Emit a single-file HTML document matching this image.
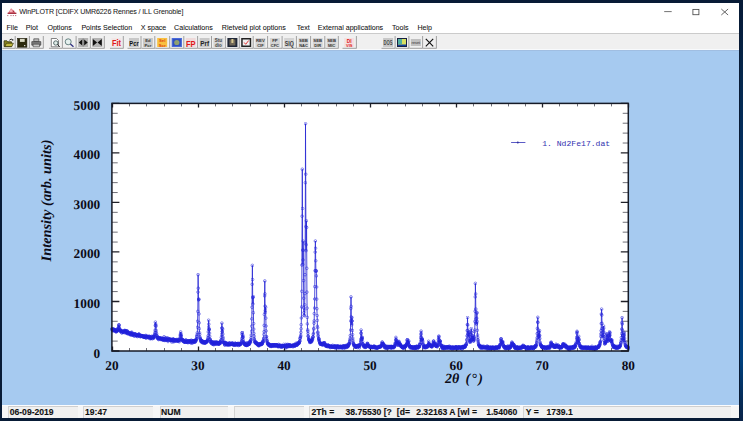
<!DOCTYPE html>
<html><head><meta charset="utf-8">
<style>
*{margin:0;padding:0;box-sizing:border-box}
html,body{width:743px;height:421px;overflow:hidden;background:#081b36;font-family:"Liberation Sans",sans-serif;position:relative}
.a{position:absolute;white-space:nowrap}
.bg{position:absolute}
.ttl{left:19.2px;top:8.2px;font-size:7.1px;letter-spacing:-0.13px;line-height:8px;color:#1a1a1a;-webkit-text-stroke:0.05px #1a1a1a}
.mn{top:23.5px;font-size:7.1px;line-height:8px;color:#111;-webkit-text-stroke:0.06px #111}
.pn{position:absolute;top:406px;height:12px;background:#f0f0f0;border-top:1px solid #cfcfcf;border-left:1px solid #d4d4d4}
.st{top:407px;font-size:8.6px;line-height:10px;font-weight:bold;color:#111;-webkit-text-stroke:0.12px #111}
.ax{font-family:"Liberation Serif",serif;font-weight:bold;fill:#0c0c18;text-rendering:geometricPrecision}
</style></head><body>
<div class="bg" style="left:740px;top:0;width:3px;height:421px;background:linear-gradient(#061a36 0px,#061c3a 20px,#05284e 80px,#003670 220px,#003c7c 300px,#00407e 360px,#062c58 400px,#0a2448 421px)"></div>
<div class="bg" style="left:2px;top:3px;width:737px;height:31px;background:#fff"></div>
<div class="bg" style="left:2px;top:33px;width:737px;height:1px;background:#cbcbcb"></div>
<div class="bg" style="left:2px;top:34px;width:737px;height:16px;background:#f0f0f0"></div>
<div class="bg" style="left:2px;top:50px;width:737px;height:355px;background:#a6caf0"></div>
<div class="bg" style="left:2px;top:49px;width:737px;height:1px;background:#f8fafc"></div>
<div class="bg" style="left:2px;top:50px;width:737px;height:1px;background:#a0bee2"></div>
<div class="bg" style="left:2px;top:405px;width:737px;height:13px;background:#f6f6f6"></div>
<div class="bg" style="left:2px;top:405px;width:737px;height:1px;background:#fbfcfe"></div>
<div class="pn" style="left:8px;width:70px"></div>
<div class="pn" style="left:83px;width:70px"></div>
<div class="pn" style="left:159.5px;width:68.5px"></div>
<div class="pn" style="left:234px;width:70px"></div>
<div class="pn" style="left:309px;width:211px"></div>
<div class="pn" style="left:523px;width:208px"></div>
<svg class="bg" style="left:0;top:0" width="743" height="421" viewBox="0 0 743 421">
 <defs><marker id="m" markerUnits="userSpaceOnUse" markerWidth="4" markerHeight="4" refX="2" refY="2" viewBox="0 0 4 4"><circle cx="2" cy="2" r="1.35" fill="none" stroke="#2626dc" stroke-width="0.5"/></marker></defs>
 <!-- title icon -->
 <path d="M7.6 13.8 L11.1 8.3 L16.4 13.8 Z" fill="#dc6a78"/>
 <path d="M10.3 9.4 L12 9.4 L12.8 12.2 L9.6 12.2Z" fill="#f4b4bc"/>
 <circle cx="13.6" cy="11.2" r="0.8" fill="#a83040"/>
 <path d="M7.6 13.3 H16.4" stroke="#a02838" stroke-width="1.2"/>
 <path d="M7.3 15.6 H8.3 M10.5 15.6 H11.5 M12.8 15.6 H13.8 M15.2 15.6 H16.2" stroke="#a04050" stroke-width="0.9"/>
 <!-- window controls -->
 <path d="M664.2 11.6 H671.7" stroke="#5a5a5a" stroke-width="0.85"/>
 <rect x="692.9" y="9.4" width="6" height="5.3" fill="none" stroke="#4a4a4a" stroke-width="0.85"/>
 <path d="M721.3 9 L728.1 15 M728.1 9 L721.3 15" stroke="#4a4a4a" stroke-width="0.85"/>
 <path d="M15.2 36 V48.5 M2.5 48.3 H15.2" stroke="#a0a0a0" stroke-width="1" fill="none"/>
 <g transform="translate(3.6 38.0)"><path d="M0.5 2.8 H3.3 L4.3 3.8 H7.8 V8.6 H0.5Z" fill="#8a8420" stroke="#34320c" stroke-width="0.8"/><path d="M1.2 8.6 L2.8 5.2 H9.8 L8.2 8.6Z" fill="#c0b840" stroke="#34320c" stroke-width="0.7"/><path d="M5.8 2.2 Q7.6 0.2 9.2 1.8" fill="none" stroke="#111" stroke-width="0.9"/><path d="M8.2 2.6 L9.8 2.6 L9.6 0.9Z" fill="#111"/></g>
 <path d="M29.4 36 V48.5 M15.7 48.3 H29.4" stroke="#a0a0a0" stroke-width="1" fill="none"/>
 <g transform="translate(17.3 38.0)"><rect x="0.4" y="0.4" width="9.2" height="8.8" fill="#2c2a0e" stroke="#1a1808" stroke-width="0.6"/><rect x="2.6" y="0.9" width="4.8" height="3" fill="#d8d8c4"/><rect x="6.8" y="7" width="1.2" height="1.2" fill="#e8e8e8"/></g>
 <path d="M43.3 36 V48.5 M29.9 48.3 H43.3" stroke="#a0a0a0" stroke-width="1" fill="none"/>
 <g transform="translate(31.3 38.0)"><path d="M2.5 0.8 H7.5 V3.6 H2.5Z" fill="#b8b8b8" stroke="#484848" stroke-width="0.7"/><path d="M0.5 3.6 H9.5 V7.2 H0.5Z" fill="#7a7a7a" stroke="#404040" stroke-width="0.7"/><path d="M1.8 6.2 H8.2 V8.8 H1.8Z" fill="#c8c8c8" stroke="#404040" stroke-width="0.6"/></g>
 <path d="M62.4 36 V48.5 M49.0 48.3 H62.4" stroke="#a0a0a0" stroke-width="1" fill="none"/>
 <g transform="translate(50.5 38.0)"><path d="M0.8 0.5 H6 L8 2.5 V8.8 H0.8Z" fill="#fff" stroke="#505050" stroke-width="0.7"/><circle cx="5.3" cy="5" r="2.2" fill="#e0ece8" stroke="#3a5050" stroke-width="0.8"/><path d="M6.8 6.5 L9.3 8.8" stroke="#222" stroke-width="1"/></g>
 <path d="M76.1 36 V48.5 M62.9 48.3 H76.1" stroke="#a0a0a0" stroke-width="1" fill="none"/>
 <g transform="translate(64.2 38.0)"><circle cx="4" cy="3.8" r="3" fill="#e4f0ee" stroke="#4a6a6a" stroke-width="0.8"/><path d="M6.2 6 L9.3 8.8" stroke="#303080" stroke-width="1.3"/></g>
 <path d="M90.3 36 V48.5 M76.6 48.3 H90.3" stroke="#a0a0a0" stroke-width="1" fill="none"/>
 <g transform="translate(78.2 38.0)"><rect x="0" y="0" width="10" height="9" fill="#b4b4b4"/><path d="M0.5 4.5 L4 1.5 V7.5Z M9.5 4.5 L6 1.5 V7.5Z" fill="#111"/><path d="M5 0.5 V8.5" stroke="#555" stroke-width="0.6"/></g>
 <path d="M104.3 36 V48.5 M90.8 48.3 H104.3" stroke="#a0a0a0" stroke-width="1" fill="none"/>
 <g transform="translate(92.3 38.0)"><rect x="0" y="0" width="10" height="9" fill="#b4b4b4"/><path d="M0.5 1 L4.8 4.5 L0.5 8Z M9.5 1 L5.2 4.5 L9.5 8Z" fill="#111"/></g>
 <path d="M123.3 36 V48.5 M110.0 48.3 H123.3" stroke="#a0a0a0" stroke-width="1" fill="none"/>
 <g transform="translate(111.4 38.0)"><rect x="0" y="0" width="10" height="9" fill="#f2e6e6"/><text x="5" y="8.3" font-family="Liberation Sans" font-size="8.5" font-weight="bold" fill="#e01818" text-anchor="middle" textLength="9" lengthAdjust="spacingAndGlyphs">Fit</text></g>
 <path d="M141.0 36 V48.5 M127.5 48.3 H141.0" stroke="#a0a0a0" stroke-width="1" fill="none"/>
 <g transform="translate(129.0 38.0)"><rect x="0" y="0" width="10" height="9" fill="#c8c8c8"/><text x="5" y="7.8" font-family="Liberation Sans" font-size="7.5" font-weight="bold" fill="#111" text-anchor="middle" textLength="9.4" lengthAdjust="spacingAndGlyphs">Pcr</text></g>
 <path d="M154.8 36 V48.5 M141.5 48.3 H154.8" stroke="#a0a0a0" stroke-width="1" fill="none"/>
 <g transform="translate(142.9 38.0)"><rect x="0" y="0" width="10" height="9" fill="#c8c8c8"/><text x="5" y="4" font-family="Liberation Sans" font-size="4.2" font-weight="bold" fill="#333" text-anchor="middle">Ed</text><text x="5" y="8.5" font-family="Liberation Sans" font-size="4.2" font-weight="bold" fill="#333" text-anchor="middle">Pcr</text></g>
 <path d="M169.7 36 V48.5 M155.3 48.3 H169.7" stroke="#a0a0a0" stroke-width="1" fill="none"/>
 <g transform="translate(157.2 38.0)"><rect x="0" y="0" width="10" height="9" fill="#f8c040"/><text x="5" y="4" font-family="Liberation Sans" font-size="4.2" font-weight="bold" fill="#e04010" text-anchor="middle">Sel</text><text x="5" y="8.5" font-family="Liberation Sans" font-size="4.2" font-weight="bold" fill="#e04010" text-anchor="middle">Scr</text></g>
 <path d="M183.8 36 V48.5 M170.2 48.3 H183.8" stroke="#a0a0a0" stroke-width="1" fill="none"/>
 <g transform="translate(171.8 38.0)"><rect x="0" y="0" width="10" height="9" fill="#3050c0"/><circle cx="5" cy="4.5" r="2.6" fill="#90a070"/><rect x="0.5" y="0.5" width="9" height="8" fill="none" stroke="#5070e0" stroke-width="0.8"/></g>
 <path d="M197.6 36 V48.5 M184.3 48.3 H197.6" stroke="#a0a0a0" stroke-width="1" fill="none"/>
 <g transform="translate(185.7 38.0)"><rect x="0" y="0" width="10" height="9" fill="#eedada"/><text x="5" y="8.5" font-family="Liberation Sans" font-size="9.5" font-weight="bold" fill="#e01818" text-anchor="middle" textLength="9.6" lengthAdjust="spacingAndGlyphs">FP</text></g>
 <path d="M211.5 36 V48.5 M198.1 48.3 H211.5" stroke="#a0a0a0" stroke-width="1" fill="none"/>
 <g transform="translate(199.6 38.0)"><rect x="0" y="0" width="10" height="9" fill="#c8c8c8"/><text x="5" y="7.5" font-family="Liberation Sans" font-size="6.3" font-weight="bold" fill="#222" text-anchor="middle">Prf</text></g>
 <path d="M225.4 36 V48.5 M212.0 48.3 H225.4" stroke="#a0a0a0" stroke-width="1" fill="none"/>
 <g transform="translate(213.4 38.0)"><rect x="0" y="0" width="10" height="9" fill="#d4d4d4"/><text x="5" y="4" font-family="Liberation Sans" font-size="4.5" font-weight="bold" fill="#444" text-anchor="middle">Stu</text><text x="5" y="8.6" font-family="Liberation Sans" font-size="4.5" font-weight="bold" fill="#444" text-anchor="middle">dio</text></g>
 <path d="M239.3 36 V48.5 M225.9 48.3 H239.3" stroke="#a0a0a0" stroke-width="1" fill="none"/>
 <g transform="translate(227.4 38.0)"><rect x="0" y="0" width="10" height="9" fill="#202838"/><rect x="2" y="1.5" width="6" height="6" fill="#706858"/><rect x="4" y="1" width="2" height="4" fill="#d8c890"/></g>
 <path d="M253.2 36 V48.5 M239.8 48.3 H253.2" stroke="#a0a0a0" stroke-width="1" fill="none"/>
 <g transform="translate(241.2 38.0)"><rect x="0" y="0" width="10" height="9" fill="#222"/><rect x="1.5" y="1.5" width="7" height="6" fill="#f0f0f0"/><path d="M3 4.5 L4.5 6.3 L7.5 2.5" fill="none" stroke="#e02020" stroke-width="0.9"/></g>
 <path d="M267.6 36 V48.5 M253.7 48.3 H267.6" stroke="#a0a0a0" stroke-width="1" fill="none"/>
 <g transform="translate(255.4 38.0)"><rect x="0" y="0" width="10" height="9" fill="#d4d4d4"/><text x="5" y="4" font-family="Liberation Sans" font-size="4.3" font-weight="bold" fill="#333" text-anchor="middle">REV</text><text x="5" y="8.6" font-family="Liberation Sans" font-size="4" font-weight="bold" fill="#333" text-anchor="middle">CIF</text></g>
 <path d="M282.1 36 V48.5 M268.1 48.3 H282.1" stroke="#a0a0a0" stroke-width="1" fill="none"/>
 <g transform="translate(269.9 38.0)"><rect x="0" y="0" width="10" height="9" fill="#d4d4d4"/><text x="5" y="4" font-family="Liberation Sans" font-size="4.3" font-weight="bold" fill="#333" text-anchor="middle">FP</text><text x="5" y="8.6" font-family="Liberation Sans" font-size="4" font-weight="bold" fill="#333" text-anchor="middle">CFC</text></g>
 <path d="M296.4 36 V48.5 M282.6 48.3 H296.4" stroke="#a0a0a0" stroke-width="1" fill="none"/>
 <g transform="translate(284.2 38.0)"><rect x="0" y="0" width="10" height="9" fill="#d4d4d4"/><text x="5" y="7.6" font-family="Liberation Sans" font-size="7" font-weight="bold" fill="#3a3a3a" text-anchor="middle" textLength="9" lengthAdjust="spacingAndGlyphs">SIQ</text></g>
 <path d="M310.6 36 V48.5 M296.9 48.3 H310.6" stroke="#a0a0a0" stroke-width="1" fill="none"/>
 <g transform="translate(298.5 38.0)"><rect x="0" y="0" width="10" height="9" fill="#d4d4d4"/><text x="5" y="4" font-family="Liberation Sans" font-size="4.3" font-weight="bold" fill="#333" text-anchor="middle">SEB</text><text x="5" y="8.6" font-family="Liberation Sans" font-size="4" font-weight="bold" fill="#333" text-anchor="middle">NAC</text></g>
 <path d="M324.8 36 V48.5 M311.1 48.3 H324.8" stroke="#a0a0a0" stroke-width="1" fill="none"/>
 <g transform="translate(312.7 38.0)"><rect x="0" y="0" width="10" height="9" fill="#d4d4d4"/><text x="5" y="4" font-family="Liberation Sans" font-size="4.3" font-weight="bold" fill="#333" text-anchor="middle">SEB</text><text x="5" y="8.6" font-family="Liberation Sans" font-size="4" font-weight="bold" fill="#333" text-anchor="middle">DIR</text></g>
 <path d="M338.3 36 V48.5 M325.3 48.3 H338.3" stroke="#a0a0a0" stroke-width="1" fill="none"/>
 <g transform="translate(326.6 38.0)"><rect x="0" y="0" width="10" height="9" fill="#d4d4d4"/><text x="5" y="4" font-family="Liberation Sans" font-size="4.3" font-weight="bold" fill="#333" text-anchor="middle">SEB</text><text x="5" y="8.6" font-family="Liberation Sans" font-size="4" font-weight="bold" fill="#333" text-anchor="middle">MIC</text></g>
 <path d="M356.4 36 V48.5 M342.5 48.3 H356.4" stroke="#a0a0a0" stroke-width="1" fill="none"/>
 <g transform="translate(344.2 38.0)"><rect x="0" y="0" width="10" height="9" fill="#f4e0e0"/><text x="5" y="4.5" font-family="Liberation Sans" font-size="4.8" font-weight="bold" fill="#e01818" text-anchor="middle">DI</text><text x="5" y="8.5" font-family="Liberation Sans" font-size="4" font-weight="bold" fill="#e01818" text-anchor="middle">VIS</text></g>
 <path d="M395.1 36 V48.5 M381.5 48.3 H395.1" stroke="#a0a0a0" stroke-width="1" fill="none"/>
 <g transform="translate(383.1 38.0)"><rect x="0" y="0" width="10" height="9" fill="#c8c8c8"/><text x="5" y="7.3" font-family="Liberation Sans" font-size="6.8" font-weight="bold" fill="#484848" text-anchor="middle" textLength="9" lengthAdjust="spacingAndGlyphs">DOS</text></g>
 <path d="M408.9 36 V48.5 M395.6 48.3 H408.9" stroke="#a0a0a0" stroke-width="1" fill="none"/>
 <g transform="translate(397.0 38.0)"><rect x="0" y="0" width="10" height="9" fill="#182040"/><rect x="1" y="1" width="8" height="6" fill="#d8e060"/><rect x="1" y="1" width="4" height="5" fill="#50b0a0"/><rect x="1" y="6.5" width="8" height="1.5" fill="#1040a0"/></g>
 <path d="M422.6 36 V48.5 M409.4 48.3 H422.6" stroke="#a0a0a0" stroke-width="1" fill="none"/>
 <g transform="translate(410.8 38.0)"><rect x="0" y="1" width="10" height="7" fill="#c0c0c0"/><text x="5" y="6" font-family="Liberation Sans" font-size="3.6" font-weight="bold" fill="#555" text-anchor="middle">reset</text></g>
 <path d="M436.4 36 V48.5 M423.1 48.3 H436.4" stroke="#a0a0a0" stroke-width="1" fill="none"/>
 <g transform="translate(424.5 38.0)"><path d="M1.3 0.8 L8.7 8.4 M8.7 0.8 L1.3 8.4" stroke="#111" stroke-width="1.15"/></g>
 <!-- plot -->
 <rect x="111.9" y="103.4" width="516.4" height="247.6" fill="#fff"/>
 <path d="M129.50 351.0 v-3 M129.50 103.4 v3 M146.50 351.0 v-3 M146.50 103.4 v3 M164.50 351.0 v-3 M164.50 103.4 v3 M181.50 351.0 v-3 M181.50 103.4 v3 M215.50 351.0 v-3 M215.50 103.4 v3 M232.50 351.0 v-3 M232.50 103.4 v3 M250.50 351.0 v-3 M250.50 103.4 v3 M267.50 351.0 v-3 M267.50 103.4 v3 M301.50 351.0 v-3 M301.50 103.4 v3 M318.50 351.0 v-3 M318.50 103.4 v3 M336.50 351.0 v-3 M336.50 103.4 v3 M353.50 351.0 v-3 M353.50 103.4 v3 M387.50 351.0 v-3 M387.50 103.4 v3 M405.50 351.0 v-3 M405.50 103.4 v3 M422.50 351.0 v-3 M422.50 103.4 v3 M439.50 351.0 v-3 M439.50 103.4 v3 M473.50 351.0 v-3 M473.50 103.4 v3 M491.50 351.0 v-3 M491.50 103.4 v3 M508.50 351.0 v-3 M508.50 103.4 v3 M525.50 351.0 v-3 M525.50 103.4 v3 M559.50 351.0 v-3 M559.50 103.4 v3 M577.50 351.0 v-3 M577.50 103.4 v3 M594.50 351.0 v-3 M594.50 103.4 v3 M611.50 351.0 v-3 M611.50 103.4 v3 M111.9 341.10 h5.8 M628.3 341.10 h-5.6 M111.9 331.19 h5.8 M628.3 331.19 h-5.6 M111.9 321.29 h5.8 M628.3 321.29 h-5.6 M111.9 311.38 h5.8 M628.3 311.38 h-5.6 M111.9 291.58 h5.8 M628.3 291.58 h-5.6 M111.9 281.67 h5.8 M628.3 281.67 h-5.6 M111.9 271.77 h5.8 M628.3 271.77 h-5.6 M111.9 261.86 h5.8 M628.3 261.86 h-5.6 M111.9 242.06 h5.8 M628.3 242.06 h-5.6 M111.9 232.15 h5.8 M628.3 232.15 h-5.6 M111.9 222.25 h5.8 M628.3 222.25 h-5.6 M111.9 212.34 h5.8 M628.3 212.34 h-5.6 M111.9 192.54 h5.8 M628.3 192.54 h-5.6 M111.9 182.63 h5.8 M628.3 182.63 h-5.6 M111.9 172.73 h5.8 M628.3 172.73 h-5.6 M111.9 162.82 h5.8 M628.3 162.82 h-5.6 M111.9 143.02 h5.8 M628.3 143.02 h-5.6 M111.9 133.11 h5.8 M628.3 133.11 h-5.6 M111.9 123.21 h5.8 M628.3 123.21 h-5.6 M111.9 113.30 h5.8 M628.3 113.30 h-5.6" stroke="#707078" stroke-width="1" fill="none"/><path d="M112.50 351.0 v-4.5 M112.50 103.4 v4 M198.50 351.0 v-4.5 M198.50 103.4 v4 M284.50 351.0 v-4.5 M284.50 103.4 v4 M370.50 351.0 v-4.5 M370.50 103.4 v4 M456.50 351.0 v-4.5 M456.50 103.4 v4 M542.50 351.0 v-4.5 M542.50 103.4 v4 M628.50 351.0 v-4.5 M628.50 103.4 v4 M111.9 351.00 h7.5 M628.3 351.00 h-7.5 M111.9 301.48 h7.5 M628.3 301.48 h-7.5 M111.9 251.96 h7.5 M628.3 251.96 h-7.5 M111.9 202.44 h7.5 M628.3 202.44 h-7.5 M111.9 152.92 h7.5 M628.3 152.92 h-7.5 M111.9 103.40 h7.5 M628.3 103.40 h-7.5" stroke="#202028" stroke-width="1.3" fill="none"/>
 <polyline points="111.9,329.5 112.1,328.6 112.2,328.7 112.4,330.1 112.6,330.0 112.8,330.2 112.9,329.4 113.1,329.9 113.3,329.3 113.4,331.3 113.6,328.8 113.8,330.1 114.0,329.6 114.1,330.2 114.3,330.4 114.5,329.8 114.7,329.6 114.8,330.4 115.0,330.4 115.2,329.8 115.3,331.0 115.5,331.5 115.7,330.1 115.9,330.9 116.0,331.9 116.2,331.1 116.4,330.8 116.5,331.4 116.7,331.6 116.9,330.4 117.1,329.7 117.2,330.5 117.4,330.8 117.6,329.8 117.8,329.4 117.9,329.9 118.1,328.8 118.3,327.8 118.4,327.8 118.6,326.8 118.8,324.7 119.0,325.2 119.1,325.2 119.3,327.8 119.5,328.6 119.6,329.7 119.8,331.0 120.0,330.1 120.2,330.1 120.3,331.3 120.5,329.9 120.7,330.5 120.9,330.8 121.0,331.0 121.2,330.7 121.4,332.5 121.5,331.1 121.7,331.2 121.9,333.0 122.1,331.4 122.2,331.9 122.4,331.2 122.6,332.1 122.7,331.8 122.9,331.6 123.1,332.5 123.3,331.4 123.4,331.9 123.6,331.5 123.8,332.2 123.9,331.0 124.1,331.4 124.3,331.9 124.5,331.3 124.6,330.8 124.8,330.3 125.0,332.8 125.2,330.9 125.3,331.1 125.5,331.5 125.7,332.2 125.8,330.5 126.0,332.5 126.2,331.2 126.4,330.8 126.5,333.1 126.7,332.2 126.9,333.1 127.0,332.1 127.2,331.3 127.4,331.0 127.6,333.9 127.7,333.1 127.9,332.3 128.1,331.8 128.3,332.7 128.4,333.6 128.6,332.9 128.8,333.2 128.9,333.4 129.1,333.9 129.3,333.1 129.5,333.2 129.6,333.6 129.8,333.7 130.0,334.6 130.1,334.0 130.3,332.9 130.5,333.9 130.7,334.9 130.8,332.9 131.0,333.5 131.2,332.4 131.4,334.0 131.5,334.4 131.7,335.1 131.9,333.2 132.0,332.3 132.2,334.8 132.4,334.7 132.6,333.9 132.7,334.9 132.9,334.6 133.1,334.6 133.2,334.3 133.4,333.7 133.6,334.5 133.8,333.9 133.9,334.9 134.1,334.4 134.3,336.2 134.4,335.7 134.6,334.2 134.8,335.2 135.0,334.4 135.1,334.4 135.3,333.9 135.5,334.3 135.7,334.2 135.8,335.0 136.0,335.5 136.2,335.6 136.3,335.4 136.5,335.9 136.7,335.5 136.9,335.2 137.0,335.0 137.2,335.5 137.4,336.6 137.5,335.3 137.7,335.2 137.9,334.6 138.1,335.0 138.2,335.9 138.4,336.0 138.6,334.1 138.8,335.0 138.9,334.3 139.1,334.1 139.3,336.2 139.4,335.4 139.6,335.3 139.8,335.3 140.0,335.3 140.1,335.6 140.3,335.7 140.5,336.9 140.6,336.0 140.8,336.4 141.0,335.8 141.2,336.3 141.3,335.5 141.5,335.4 141.7,335.8 141.9,335.8 142.0,336.0 142.2,336.4 142.4,336.3 142.5,336.5 142.7,335.9 142.9,336.2 143.1,335.9 143.2,337.2 143.4,335.7 143.6,336.9 143.7,336.9 143.9,336.5 144.1,336.8 144.3,336.2 144.4,336.9 144.6,337.3 144.8,337.1 144.9,335.6 145.1,336.6 145.3,337.4 145.5,336.6 145.6,337.8 145.8,335.4 146.0,337.8 146.2,336.4 146.3,336.4 146.5,337.8 146.7,336.6 146.8,336.2 147.0,336.6 147.2,336.7 147.4,336.3 147.5,336.8 147.7,336.7 147.9,337.1 148.0,336.6 148.2,337.7 148.4,336.5 148.6,337.4 148.7,337.9 148.9,336.9 149.1,336.0 149.3,336.5 149.4,337.6 149.6,336.7 149.8,337.6 149.9,337.4 150.1,337.2 150.3,338.9 150.5,337.2 150.6,338.1 150.8,337.8 151.0,338.4 151.1,338.4 151.3,338.1 151.5,336.9 151.7,336.3 151.8,337.5 152.0,336.7 152.2,337.6 152.4,338.8 152.5,337.3 152.7,337.1 152.9,337.7 153.0,337.2 153.2,337.0 153.4,337.9 153.6,338.3 153.7,337.3 153.9,337.1 154.1,337.1 154.2,335.8 154.4,334.9 154.6,335.9 154.8,334.2 154.9,332.5 155.1,330.2 155.3,325.5 155.4,322.1 155.6,324.1 155.8,325.3 156.0,326.3 156.1,330.3 156.3,332.4 156.5,333.7 156.7,335.4 156.8,336.8 157.0,335.8 157.2,338.0 157.3,337.1 157.5,337.6 157.7,338.6 157.9,337.1 158.0,337.8 158.2,338.9 158.4,337.7 158.5,338.5 158.7,339.6 158.9,338.8 159.1,338.2 159.2,338.0 159.4,338.4 159.6,338.5 159.8,338.2 159.9,338.7 160.1,337.8 160.3,338.5 160.4,338.5 160.6,338.3 160.8,339.5 161.0,339.2 161.1,337.8 161.3,338.6 161.5,339.0 161.6,338.6 161.8,339.2 162.0,338.7 162.2,339.4 162.3,338.8 162.5,340.1 162.7,338.1 162.9,339.4 163.0,340.1 163.2,339.2 163.4,339.4 163.5,339.0 163.7,339.9 163.9,338.9 164.1,336.7 164.2,340.1 164.4,339.0 164.6,339.5 164.7,339.2 164.9,340.5 165.1,340.1 165.3,339.0 165.4,339.4 165.6,338.3 165.8,339.9 165.9,339.3 166.1,337.5 166.3,340.0 166.5,340.1 166.6,339.5 166.8,339.6 167.0,339.0 167.2,339.5 167.3,340.1 167.5,339.5 167.7,337.9 167.8,338.8 168.0,341.5 168.2,339.8 168.4,340.3 168.5,339.3 168.7,339.9 168.9,338.5 169.0,339.2 169.2,339.2 169.4,339.7 169.6,339.9 169.7,339.6 169.9,339.0 170.1,339.5 170.3,340.1 170.4,339.1 170.6,339.8 170.8,340.0 170.9,340.5 171.1,340.4 171.3,340.4 171.5,341.9 171.6,339.4 171.8,339.7 172.0,340.2 172.1,339.4 172.3,339.8 172.5,339.9 172.7,341.8 172.8,340.3 173.0,339.8 173.2,339.1 173.4,339.0 173.5,339.3 173.7,341.0 173.9,341.7 174.0,339.9 174.2,340.3 174.4,339.7 174.6,340.4 174.7,340.2 174.9,341.4 175.1,340.1 175.2,340.7 175.4,340.2 175.6,340.1 175.8,340.5 175.9,340.2 176.1,340.5 176.3,340.0 176.4,340.1 176.6,340.9 176.8,340.9 177.0,339.4 177.1,340.6 177.3,339.9 177.5,340.3 177.7,340.9 177.8,341.0 178.0,340.4 178.2,340.3 178.3,340.1 178.5,341.3 178.7,340.8 178.9,340.4 179.0,339.2 179.2,341.8 179.4,339.8 179.5,340.2 179.7,339.3 179.9,339.4 180.1,338.0 180.2,335.9 180.4,334.3 180.6,331.9 180.8,333.6 180.9,335.8 181.1,334.8 181.3,336.0 181.4,338.2 181.6,338.8 181.8,339.6 182.0,339.4 182.1,340.2 182.3,340.8 182.5,339.6 182.6,340.0 182.8,339.9 183.0,340.4 183.2,341.0 183.3,341.2 183.5,341.2 183.7,340.4 183.9,341.0 184.0,342.1 184.2,341.1 184.4,342.1 184.5,341.1 184.7,342.0 184.9,342.0 185.1,341.2 185.2,341.3 185.4,342.4 185.6,340.8 185.7,339.9 185.9,342.3 186.1,340.2 186.3,341.8 186.4,341.7 186.6,341.5 186.8,342.3 187.0,340.6 187.1,341.1 187.3,341.9 187.5,341.6 187.6,342.5 187.8,341.7 188.0,340.9 188.2,342.6 188.3,341.8 188.5,341.4 188.7,340.9 188.8,340.7 189.0,341.9 189.2,342.0 189.4,341.3 189.5,341.8 189.7,341.8 189.9,340.9 190.0,340.5 190.2,341.4 190.4,341.7 190.6,341.3 190.7,342.9 190.9,341.6 191.1,342.3 191.3,340.1 191.4,341.2 191.6,341.5 191.8,341.8 191.9,343.3 192.1,341.2 192.3,340.6 192.5,342.1 192.6,341.2 192.8,341.1 193.0,342.6 193.1,341.0 193.3,340.7 193.5,341.4 193.7,341.5 193.8,341.0 194.0,342.4 194.2,341.3 194.4,340.7 194.5,342.1 194.7,340.6 194.9,341.4 195.0,342.4 195.2,341.0 195.4,341.4 195.6,340.4 195.7,341.2 195.9,339.5 196.1,340.4 196.2,339.2 196.4,339.4 196.6,338.5 196.8,336.6 196.9,336.1 197.1,334.8 197.3,332.9 197.5,327.2 197.6,321.2 197.8,311.4 198.0,292.1 198.1,274.6 198.3,288.2 198.5,300.0 198.7,299.1 198.8,299.4 199.0,313.9 199.2,322.8 199.3,328.7 199.5,332.8 199.7,334.5 199.9,337.0 200.0,338.1 200.2,338.5 200.4,339.5 200.5,339.4 200.7,341.1 200.9,339.7 201.1,341.4 201.2,341.2 201.4,342.1 201.6,341.0 201.8,340.7 201.9,340.9 202.1,341.2 202.3,342.8 202.4,342.4 202.6,342.2 202.8,342.6 203.0,341.3 203.1,342.0 203.3,342.1 203.5,341.9 203.6,342.8 203.8,342.8 204.0,342.8 204.2,342.0 204.3,342.1 204.5,341.9 204.7,341.6 204.9,343.2 205.0,342.7 205.2,342.2 205.4,343.2 205.5,342.6 205.7,341.6 205.9,341.5 206.1,341.5 206.2,342.1 206.4,342.2 206.6,341.3 206.7,342.1 206.9,341.5 207.1,340.6 207.3,341.5 207.4,341.2 207.6,340.2 207.8,339.0 208.0,337.7 208.1,335.8 208.3,331.9 208.5,327.1 208.6,320.2 208.8,324.2 209.0,329.3 209.2,329.9 209.3,329.1 209.5,333.1 209.7,336.3 209.8,339.1 210.0,339.5 210.2,339.4 210.4,341.2 210.5,340.7 210.7,341.7 210.9,342.8 211.0,342.4 211.2,343.0 211.4,342.0 211.6,343.3 211.7,341.8 211.9,342.4 212.1,344.1 212.3,342.4 212.4,341.9 212.6,343.5 212.8,342.4 212.9,344.2 213.1,342.9 213.3,344.1 213.5,342.8 213.6,344.3 213.8,344.8 214.0,342.9 214.1,341.7 214.3,343.6 214.5,342.7 214.7,343.2 214.8,343.5 215.0,342.9 215.2,342.2 215.4,344.1 215.5,342.9 215.7,343.1 215.9,344.2 216.0,342.3 216.2,342.1 216.4,343.9 216.6,342.3 216.7,343.3 216.9,343.5 217.1,342.4 217.2,343.2 217.4,343.2 217.6,342.4 217.8,342.6 217.9,342.8 218.1,344.2 218.3,344.3 218.5,342.6 218.6,343.9 218.8,343.2 219.0,343.9 219.1,343.3 219.3,344.0 219.5,342.1 219.7,343.7 219.8,343.1 220.0,343.0 220.2,341.9 220.3,343.4 220.5,342.3 220.7,342.0 220.9,341.0 221.0,340.3 221.2,339.8 221.4,337.4 221.5,334.6 221.7,328.3 221.9,323.1 222.1,327.9 222.2,331.4 222.4,331.7 222.6,329.0 222.8,334.1 222.9,337.1 223.1,338.5 223.3,342.1 223.4,342.7 223.6,342.8 223.8,342.5 224.0,341.2 224.1,342.7 224.3,342.4 224.5,343.4 224.6,344.9 224.8,344.9 225.0,342.9 225.2,343.5 225.3,344.4 225.5,343.0 225.7,344.7 225.9,343.0 226.0,342.9 226.2,344.3 226.4,344.5 226.5,343.3 226.7,344.6 226.9,343.4 227.1,344.7 227.2,343.4 227.4,343.9 227.6,344.2 227.7,344.5 227.9,343.9 228.1,345.2 228.3,344.2 228.4,344.3 228.6,343.6 228.8,344.8 229.0,343.0 229.1,344.3 229.3,344.8 229.5,343.2 229.6,343.1 229.8,344.2 230.0,344.7 230.2,344.1 230.3,344.6 230.5,344.4 230.7,343.2 230.8,343.9 231.0,344.1 231.2,344.0 231.4,344.2 231.5,343.7 231.7,343.7 231.9,344.5 232.0,344.2 232.2,342.8 232.4,344.0 232.6,344.4 232.7,343.0 232.9,344.3 233.1,345.0 233.3,343.9 233.4,344.9 233.6,344.6 233.8,344.1 233.9,344.4 234.1,344.8 234.3,344.7 234.5,344.7 234.6,343.6 234.8,344.8 235.0,344.7 235.1,343.1 235.3,344.7 235.5,343.4 235.7,343.6 235.8,344.5 236.0,345.2 236.2,344.1 236.4,344.0 236.5,343.8 236.7,344.3 236.9,343.6 237.0,343.5 237.2,345.0 237.4,343.5 237.6,344.3 237.7,344.7 237.9,344.6 238.1,343.2 238.2,343.7 238.4,345.5 238.6,344.3 238.8,344.4 238.9,344.4 239.1,344.6 239.3,345.2 239.5,343.7 239.6,344.8 239.8,344.4 240.0,344.5 240.1,344.5 240.3,343.5 240.5,343.6 240.7,344.1 240.8,344.1 241.0,343.5 241.2,342.3 241.3,342.3 241.5,341.4 241.7,340.5 241.9,338.3 242.0,334.3 242.2,332.6 242.4,332.6 242.5,336.9 242.7,337.4 242.9,335.3 243.1,336.9 243.2,339.5 243.4,341.5 243.6,343.1 243.8,342.6 243.9,342.4 244.1,344.0 244.3,342.8 244.4,344.5 244.6,344.4 244.8,343.7 245.0,344.1 245.1,343.7 245.3,344.7 245.5,344.9 245.6,345.4 245.8,345.0 246.0,344.9 246.2,345.2 246.3,344.1 246.5,344.7 246.7,345.5 246.9,342.7 247.0,344.8 247.2,345.0 247.4,343.4 247.5,343.5 247.7,344.9 247.9,345.0 248.1,344.7 248.2,343.3 248.4,344.1 248.6,344.4 248.7,343.8 248.9,342.9 249.1,344.4 249.3,343.7 249.4,344.1 249.6,341.7 249.8,341.7 250.0,342.0 250.1,342.3 250.3,341.4 250.5,342.7 250.6,340.4 250.8,340.7 251.0,339.5 251.2,337.5 251.3,335.1 251.5,331.2 251.7,326.2 251.8,318.9 252.0,307.2 252.2,284.3 252.4,265.4 252.5,279.5 252.7,297.6 252.9,303.9 253.0,297.4 253.2,296.5 253.4,312.7 253.6,323.6 253.7,329.1 253.9,333.4 254.1,336.1 254.3,338.6 254.4,339.5 254.6,340.4 254.8,341.7 254.9,342.5 255.1,342.2 255.3,342.0 255.5,342.5 255.6,342.9 255.8,343.1 256.0,341.9 256.1,343.5 256.3,343.2 256.5,342.7 256.7,344.0 256.8,344.0 257.0,343.5 257.2,343.2 257.4,344.1 257.5,344.1 257.7,344.3 257.9,345.2 258.0,343.8 258.2,344.6 258.4,345.6 258.6,344.6 258.7,345.6 258.9,345.2 259.1,344.5 259.2,345.1 259.4,343.9 259.6,345.5 259.8,344.4 259.9,344.2 260.1,343.6 260.3,343.9 260.5,344.3 260.6,344.4 260.8,344.4 261.0,343.6 261.1,344.7 261.3,343.9 261.5,344.2 261.7,343.9 261.8,344.1 262.0,342.4 262.2,344.0 262.3,343.2 262.5,342.9 262.7,342.4 262.9,342.1 263.0,341.5 263.2,340.5 263.4,341.2 263.5,339.0 263.7,338.1 263.9,334.5 264.1,331.6 264.2,325.4 264.4,314.5 264.6,295.9 264.8,280.9 264.9,293.8 265.1,306.1 265.3,312.5 265.4,310.5 265.6,307.3 265.8,318.1 266.0,326.0 266.1,330.9 266.3,336.9 266.5,336.5 266.6,338.8 266.8,340.4 267.0,341.5 267.2,340.8 267.3,342.8 267.5,343.5 267.7,343.4 267.9,344.6 268.0,343.7 268.2,344.2 268.4,344.1 268.5,344.2 268.7,345.2 268.9,343.8 269.1,345.3 269.2,344.2 269.4,345.8 269.6,344.7 269.7,345.5 269.9,345.0 270.1,345.4 270.3,346.4 270.4,345.8 270.6,345.1 270.8,344.8 271.0,346.1 271.1,346.5 271.3,345.8 271.5,345.4 271.6,345.7 271.8,345.8 272.0,344.8 272.2,344.8 272.3,344.9 272.5,346.0 272.7,345.4 272.8,345.6 273.0,346.3 273.2,344.9 273.4,345.4 273.5,345.8 273.7,344.6 273.9,345.0 274.0,345.0 274.2,344.8 274.4,345.1 274.6,346.3 274.7,345.8 274.9,345.0 275.1,346.0 275.3,345.6 275.4,345.4 275.6,344.7 275.8,344.8 275.9,345.1 276.1,345.7 276.3,345.1 276.5,345.3 276.6,345.7 276.8,344.8 277.0,345.4 277.1,346.1 277.3,344.9 277.5,345.8 277.7,345.3 277.8,346.6 278.0,345.7 278.2,346.3 278.4,346.3 278.5,346.8 278.7,344.4 278.9,345.8 279.0,345.6 279.2,345.1 279.4,345.8 279.6,345.4 279.7,346.5 279.9,345.6 280.1,346.0 280.2,345.4 280.4,345.6 280.6,346.6 280.8,346.9 280.9,346.4 281.1,345.3 281.3,345.5 281.5,345.5 281.6,347.0 281.8,347.4 282.0,346.1 282.1,346.0 282.3,346.1 282.5,345.6 282.7,345.9 282.8,346.5 283.0,346.3 283.2,345.7 283.3,345.7 283.5,345.8 283.7,344.4 283.9,346.0 284.0,345.7 284.2,346.4 284.4,346.0 284.5,345.5 284.7,345.5 284.9,345.9 285.1,345.6 285.2,345.8 285.4,346.9 285.6,347.8 285.8,344.4 285.9,345.3 286.1,345.8 286.3,346.8 286.4,346.6 286.6,345.0 286.8,347.5 287.0,346.0 287.1,345.3 287.3,345.7 287.5,345.3 287.6,345.9 287.8,344.4 288.0,346.4 288.2,346.6 288.3,345.6 288.5,344.9 288.7,345.8 288.9,345.1 289.0,346.1 289.2,346.5 289.4,344.9 289.5,344.8 289.7,344.8 289.9,346.0 290.1,346.4 290.2,346.4 290.4,345.8 290.6,345.4 290.7,345.4 290.9,346.5 291.1,345.6 291.3,345.7 291.4,345.6 291.6,345.7 291.8,345.8 292.0,345.3 292.1,345.5 292.3,345.5 292.5,346.0 292.6,345.3 292.8,345.6 293.0,346.8 293.2,345.2 293.3,345.7 293.5,344.9 293.7,345.6 293.8,345.5 294.0,345.3 294.2,345.4 294.4,345.6 294.5,346.4 294.7,344.2 294.9,346.2 295.0,345.4 295.2,344.8 295.4,344.9 295.6,344.8 295.7,344.6 295.9,344.2 296.1,344.8 296.3,343.1 296.4,345.4 296.6,344.6 296.8,344.9 296.9,344.9 297.1,344.3 297.3,343.5 297.5,344.8 297.6,344.6 297.8,343.6 298.0,343.6 298.1,342.6 298.3,343.0 298.5,343.3 298.7,343.4 298.8,342.8 299.0,342.8 299.2,343.2 299.4,342.0 299.5,341.7 299.7,341.2 299.9,340.7 300.0,338.6 300.2,338.3 300.4,337.1 300.6,336.7 300.7,335.3 300.9,332.4 301.1,328.8 301.2,324.7 301.4,318.0 301.6,306.9 301.8,291.3 301.9,265.1 302.1,216.2 302.3,169.2 302.5,208.5 302.6,250.1 302.8,264.4 303.0,259.9 303.1,241.1 303.3,250.3 303.5,280.6 303.7,298.2 303.8,307.8 304.0,312.6 304.2,315.3 304.3,315.7 304.5,310.2 304.7,304.8 304.9,293.6 305.0,274.7 305.2,243.0 305.4,182.7 305.5,123.7 305.7,174.2 305.9,226.6 306.1,250.6 306.2,244.7 306.4,220.8 306.6,227.5 306.8,268.3 306.9,292.1 307.1,308.1 307.3,317.4 307.4,323.9 307.6,329.8 307.8,331.1 308.0,333.5 308.1,336.0 308.3,336.5 308.5,337.6 308.6,339.0 308.8,339.4 309.0,340.0 309.2,340.1 309.3,340.9 309.5,340.5 309.7,342.4 309.9,341.5 310.0,342.5 310.2,341.8 310.4,341.2 310.5,341.5 310.7,341.6 310.9,341.4 311.1,340.3 311.2,342.0 311.4,340.5 311.6,341.8 311.7,340.9 311.9,340.1 312.1,340.4 312.3,339.3 312.4,338.4 312.6,339.0 312.8,337.5 313.0,336.8 313.1,336.7 313.3,334.1 313.5,332.9 313.6,329.3 313.8,328.4 314.0,323.2 314.2,320.9 314.3,313.6 314.5,308.0 314.7,299.0 314.8,286.6 315.0,270.7 315.2,252.1 315.4,241.0 315.5,248.2 315.7,260.8 315.9,270.6 316.1,271.4 316.2,270.8 316.4,275.9 316.6,287.0 316.7,299.1 316.9,308.7 317.1,315.5 317.3,320.4 317.4,326.3 317.6,327.7 317.8,332.0 317.9,333.1 318.1,335.2 318.3,336.4 318.5,338.1 318.6,339.1 318.8,339.3 319.0,340.6 319.1,338.9 319.3,341.3 319.5,341.9 319.7,342.3 319.8,343.0 320.0,344.1 320.2,343.0 320.4,342.9 320.5,344.3 320.7,343.5 320.9,344.4 321.0,343.8 321.2,343.7 321.4,343.8 321.6,343.9 321.7,344.7 321.9,343.7 322.1,344.6 322.2,344.1 322.4,343.9 322.6,344.5 322.8,345.0 322.9,343.6 323.1,344.5 323.3,344.1 323.5,343.9 323.6,342.5 323.8,343.3 324.0,344.9 324.1,343.2 324.3,342.5 324.5,342.8 324.7,344.4 324.8,344.3 325.0,344.3 325.2,344.3 325.3,345.0 325.5,345.9 325.7,344.9 325.9,345.1 326.0,346.4 326.2,345.9 326.4,345.6 326.6,345.8 326.7,345.6 326.9,345.4 327.1,345.6 327.2,346.1 327.4,346.8 327.6,345.7 327.8,345.3 327.9,345.0 328.1,346.2 328.3,346.2 328.4,345.4 328.6,345.4 328.8,346.1 329.0,345.9 329.1,346.8 329.3,346.0 329.5,346.8 329.6,346.4 329.8,346.4 330.0,346.7 330.2,347.6 330.3,346.9 330.5,346.2 330.7,346.5 330.9,346.7 331.0,346.2 331.2,346.1 331.4,346.0 331.5,347.0 331.7,346.5 331.9,346.7 332.1,347.0 332.2,347.4 332.4,346.6 332.6,347.1 332.7,345.3 332.9,346.6 333.1,346.7 333.3,346.8 333.4,345.5 333.6,347.2 333.8,346.7 334.0,347.1 334.1,346.7 334.3,346.7 334.5,346.0 334.6,347.5 334.8,346.7 335.0,345.7 335.2,347.0 335.3,346.8 335.5,347.2 335.7,348.2 335.8,346.8 336.0,346.0 336.2,347.0 336.4,347.8 336.5,346.6 336.7,346.7 336.9,346.1 337.1,346.2 337.2,346.9 337.4,346.5 337.6,347.8 337.7,346.1 337.9,346.6 338.1,346.1 338.3,346.1 338.4,346.9 338.6,346.8 338.8,347.3 338.9,348.0 339.1,346.8 339.3,346.7 339.5,347.4 339.6,346.4 339.8,346.7 340.0,346.5 340.1,347.2 340.3,347.8 340.5,346.3 340.7,346.4 340.8,346.8 341.0,347.0 341.2,346.9 341.4,346.9 341.5,347.1 341.7,347.9 341.9,346.3 342.0,347.6 342.2,347.0 342.4,346.9 342.6,346.6 342.7,347.7 342.9,346.1 343.1,346.4 343.2,346.3 343.4,346.0 343.6,347.2 343.8,348.6 343.9,346.5 344.1,345.9 344.3,346.0 344.5,347.0 344.6,346.7 344.8,346.5 345.0,347.7 345.1,347.0 345.3,347.0 345.5,345.7 345.7,347.0 345.8,345.6 346.0,346.5 346.2,347.5 346.3,345.2 346.5,347.0 346.7,346.0 346.9,345.4 347.0,346.6 347.2,347.0 347.4,345.6 347.6,346.1 347.7,346.7 347.9,346.6 348.1,346.0 348.2,345.1 348.4,345.7 348.6,344.9 348.8,344.0 348.9,344.0 349.1,343.5 349.3,343.1 349.4,344.3 349.6,341.7 349.8,341.2 350.0,339.9 350.1,338.4 350.3,335.5 350.5,330.0 350.6,320.9 350.8,308.5 351.0,296.9 351.2,306.4 351.3,316.9 351.5,323.5 351.7,324.8 351.9,320.9 352.0,317.5 352.2,321.0 352.4,330.4 352.5,334.6 352.7,338.1 352.9,340.2 353.1,342.1 353.2,343.5 353.4,343.8 353.6,344.5 353.7,344.0 353.9,344.4 354.1,346.0 354.3,345.1 354.4,345.9 354.6,345.5 354.8,346.2 355.0,346.9 355.1,345.5 355.3,345.9 355.5,347.0 355.6,347.4 355.8,346.7 356.0,347.1 356.2,346.7 356.3,346.1 356.5,345.6 356.7,346.7 356.8,345.7 357.0,345.9 357.2,346.8 357.4,347.5 357.5,346.1 357.7,346.2 357.9,345.2 358.1,345.7 358.2,346.0 358.4,345.5 358.6,347.0 358.7,346.3 358.9,346.5 359.1,345.2 359.3,345.8 359.4,347.8 359.6,344.9 359.8,346.1 359.9,344.7 360.1,344.9 360.3,343.8 360.5,342.4 360.6,341.0 360.8,339.1 361.0,333.0 361.1,330.0 361.3,333.6 361.5,336.9 361.7,339.7 361.8,338.7 362.0,339.1 362.2,337.3 362.4,338.0 362.5,341.6 362.7,343.6 362.9,343.9 363.0,344.6 363.2,344.5 363.4,345.4 363.6,346.6 363.7,345.8 363.9,345.7 364.1,345.8 364.2,346.2 364.4,347.2 364.6,345.9 364.8,347.0 364.9,346.3 365.1,347.5 365.3,346.2 365.5,347.1 365.6,345.9 365.8,345.5 366.0,345.8 366.1,347.1 366.3,346.8 366.5,346.6 366.7,345.4 366.8,345.2 367.0,344.8 367.2,343.9 367.3,343.2 367.5,343.6 367.7,343.6 367.9,345.0 368.0,345.0 368.2,346.2 368.4,345.8 368.6,345.5 368.7,346.2 368.9,345.8 369.1,345.6 369.2,346.7 369.4,346.9 369.6,347.0 369.8,346.7 369.9,347.2 370.1,346.7 370.3,346.8 370.4,346.8 370.6,346.6 370.8,347.0 371.0,347.0 371.1,346.1 371.3,347.1 371.5,346.7 371.6,347.1 371.8,347.4 372.0,347.4 372.2,347.6 372.3,347.2 372.5,347.5 372.7,347.4 372.9,346.5 373.0,347.3 373.2,346.5 373.4,347.1 373.5,346.7 373.7,347.6 373.9,347.1 374.1,345.7 374.2,346.7 374.4,346.6 374.6,347.1 374.7,346.7 374.9,347.9 375.1,347.7 375.3,347.0 375.4,346.8 375.6,347.5 375.8,347.3 376.0,347.4 376.1,347.3 376.3,347.9 376.5,348.1 376.6,347.3 376.8,348.2 377.0,347.8 377.2,347.6 377.3,347.8 377.5,347.1 377.7,347.5 377.8,347.2 378.0,347.8 378.2,347.6 378.4,346.9 378.5,346.9 378.7,347.4 378.9,346.9 379.1,347.0 379.2,347.0 379.4,346.1 379.6,347.2 379.7,346.7 379.9,346.6 380.1,347.0 380.3,347.4 380.4,346.2 380.6,346.4 380.8,346.3 380.9,346.1 381.1,345.9 381.3,346.1 381.5,344.9 381.6,345.6 381.8,343.6 382.0,343.6 382.1,342.3 382.3,342.0 382.5,343.3 382.7,344.0 382.8,343.7 383.0,344.2 383.2,344.2 383.4,344.2 383.5,343.6 383.7,344.7 383.9,345.3 384.0,346.6 384.2,345.8 384.4,347.2 384.6,346.3 384.7,347.3 384.9,345.7 385.1,347.9 385.2,346.2 385.4,346.5 385.6,348.1 385.8,347.2 385.9,346.3 386.1,346.5 386.3,348.1 386.5,347.5 386.6,347.9 386.8,347.8 387.0,347.6 387.1,346.2 387.3,347.2 387.5,347.4 387.7,347.5 387.8,346.9 388.0,346.9 388.2,347.8 388.3,346.5 388.5,347.9 388.7,347.5 388.9,347.1 389.0,346.3 389.2,347.5 389.4,347.2 389.6,346.6 389.7,347.0 389.9,346.7 390.1,346.7 390.2,347.2 390.4,347.0 390.6,346.8 390.8,347.3 390.9,346.4 391.1,348.4 391.3,347.8 391.4,346.4 391.6,347.0 391.8,347.6 392.0,347.0 392.1,346.6 392.3,347.5 392.5,346.7 392.6,347.2 392.8,347.2 393.0,347.1 393.2,346.4 393.3,347.6 393.5,347.1 393.7,346.5 393.9,347.5 394.0,347.6 394.2,346.2 394.4,346.4 394.5,346.2 394.7,345.8 394.9,346.1 395.1,343.2 395.2,344.9 395.4,343.5 395.6,342.7 395.7,340.0 395.9,337.4 396.1,339.4 396.3,340.6 396.4,342.4 396.6,341.4 396.8,342.4 397.0,342.7 397.1,341.1 397.3,342.5 397.5,342.9 397.6,344.0 397.8,344.3 398.0,344.6 398.2,345.2 398.3,345.3 398.5,343.3 398.7,343.2 398.8,341.7 399.0,341.4 399.2,343.2 399.4,343.8 399.5,342.9 399.7,344.6 399.9,344.4 400.1,344.8 400.2,344.0 400.4,344.4 400.6,345.1 400.7,345.6 400.9,346.3 401.1,346.6 401.3,346.5 401.4,346.4 401.6,346.8 401.8,345.8 401.9,346.8 402.1,346.9 402.3,347.4 402.5,346.5 402.6,347.7 402.8,348.0 403.0,347.7 403.1,346.8 403.3,347.8 403.5,346.4 403.7,347.1 403.8,348.0 404.0,347.2 404.2,346.0 404.4,347.5 404.5,347.8 404.7,346.7 404.9,346.2 405.0,346.3 405.2,347.0 405.4,346.6 405.6,346.4 405.7,345.7 405.9,344.9 406.1,346.0 406.2,344.7 406.4,345.2 406.6,344.0 406.8,344.0 406.9,342.5 407.1,340.1 407.3,339.9 407.5,339.5 407.6,341.8 407.8,342.4 408.0,343.0 408.1,343.2 408.3,342.6 408.5,341.7 408.7,340.9 408.8,344.6 409.0,344.6 409.2,345.5 409.3,346.3 409.5,346.0 409.7,346.9 409.9,346.6 410.0,346.0 410.2,348.0 410.4,346.8 410.6,346.8 410.7,347.6 410.9,346.8 411.1,347.0 411.2,347.4 411.4,346.6 411.6,348.0 411.8,346.9 411.9,347.5 412.1,348.0 412.3,347.5 412.4,347.6 412.6,346.9 412.8,348.3 413.0,347.5 413.1,347.7 413.3,346.5 413.5,348.1 413.6,346.8 413.8,348.4 414.0,347.2 414.2,347.5 414.3,347.2 414.5,347.8 414.7,348.6 414.9,348.3 415.0,346.7 415.2,347.3 415.4,347.9 415.5,346.9 415.7,347.8 415.9,347.8 416.1,348.1 416.2,346.7 416.4,346.3 416.6,347.9 416.7,347.2 416.9,346.8 417.1,346.1 417.3,348.7 417.4,347.2 417.6,346.9 417.8,348.0 418.0,346.9 418.1,347.0 418.3,346.6 418.5,347.3 418.6,346.6 418.8,347.1 419.0,346.3 419.2,346.4 419.3,346.5 419.5,346.8 419.7,344.7 419.8,344.5 420.0,344.1 420.2,344.1 420.4,342.7 420.5,339.6 420.7,337.4 420.9,334.6 421.1,331.1 421.2,333.4 421.4,337.1 421.6,339.8 421.7,339.4 421.9,339.9 422.1,339.6 422.3,339.2 422.4,338.9 422.6,340.8 422.8,342.1 422.9,344.1 423.1,344.1 423.3,345.2 423.5,346.2 423.6,347.7 423.8,347.0 424.0,347.4 424.1,346.7 424.3,346.6 424.5,346.0 424.7,346.9 424.8,347.6 425.0,345.6 425.2,346.9 425.4,347.2 425.5,347.2 425.7,347.9 425.9,346.7 426.0,346.8 426.2,346.1 426.4,346.4 426.6,346.5 426.7,346.2 426.9,347.0 427.1,347.0 427.2,346.6 427.4,347.2 427.6,346.3 427.8,346.1 427.9,345.0 428.1,344.8 428.3,345.2 428.5,342.9 428.6,341.3 428.8,343.9 429.0,344.1 429.1,344.3 429.3,345.4 429.5,345.0 429.7,344.5 429.8,345.0 430.0,344.1 430.2,344.6 430.3,346.2 430.5,345.8 430.7,345.5 430.9,346.4 431.0,346.2 431.2,346.2 431.4,346.7 431.6,346.0 431.7,346.3 431.9,347.1 432.1,346.1 432.2,345.8 432.4,345.6 432.6,346.2 432.8,345.2 432.9,344.2 433.1,344.1 433.3,342.5 433.4,341.2 433.6,341.2 433.8,341.4 434.0,343.1 434.1,343.0 434.3,344.1 434.5,344.5 434.6,344.0 434.8,343.7 435.0,343.4 435.2,344.0 435.3,345.7 435.5,345.8 435.7,345.6 435.9,345.8 436.0,346.2 436.2,344.8 436.4,345.7 436.5,346.4 436.7,345.9 436.9,345.5 437.1,346.0 437.2,347.0 437.4,345.7 437.6,345.4 437.7,343.7 437.9,345.5 438.1,342.5 438.3,342.3 438.4,339.7 438.6,338.0 438.8,336.0 439.0,336.7 439.1,339.7 439.3,340.6 439.5,342.1 439.6,342.5 439.8,342.0 440.0,341.4 440.2,341.0 440.3,341.2 440.5,344.2 440.7,345.5 440.8,345.2 441.0,344.7 441.2,345.5 441.4,345.6 441.5,345.8 441.7,347.2 441.9,346.8 442.1,348.5 442.2,347.4 442.4,346.8 442.6,348.1 442.7,348.4 442.9,348.0 443.1,347.2 443.3,346.7 443.4,345.9 443.6,346.6 443.8,348.3 443.9,348.8 444.1,347.4 444.3,346.9 444.5,348.4 444.6,347.8 444.8,347.8 445.0,347.5 445.2,347.7 445.3,347.3 445.5,347.0 445.7,347.5 445.8,347.2 446.0,346.5 446.2,348.2 446.4,348.2 446.5,347.3 446.7,346.6 446.9,347.5 447.0,347.0 447.2,347.8 447.4,347.1 447.6,348.0 447.7,347.3 447.9,347.4 448.1,347.4 448.2,346.9 448.4,347.0 448.6,348.0 448.8,347.1 448.9,348.6 449.1,347.1 449.3,346.1 449.5,347.3 449.6,347.4 449.8,347.6 450.0,347.2 450.1,347.9 450.3,347.3 450.5,347.8 450.7,347.9 450.8,347.6 451.0,347.7 451.2,348.6 451.3,346.5 451.5,347.6 451.7,348.6 451.9,347.0 452.0,347.7 452.2,347.5 452.4,347.2 452.6,348.2 452.7,349.3 452.9,347.7 453.1,347.5 453.2,347.1 453.4,348.1 453.6,347.8 453.8,347.4 453.9,347.8 454.1,347.8 454.3,347.5 454.4,348.2 454.6,346.7 454.8,348.2 455.0,347.6 455.1,347.8 455.3,348.0 455.5,347.3 455.7,347.1 455.8,346.8 456.0,347.3 456.2,347.9 456.3,347.1 456.5,348.4 456.7,347.6 456.9,347.3 457.0,347.3 457.2,348.3 457.4,348.5 457.5,346.7 457.7,347.9 457.9,348.5 458.1,348.3 458.2,347.6 458.4,346.9 458.6,347.6 458.7,346.9 458.9,347.4 459.1,347.3 459.3,347.0 459.4,347.8 459.6,347.4 459.8,347.8 460.0,347.9 460.1,347.2 460.3,348.0 460.5,347.5 460.6,347.9 460.8,347.5 461.0,347.8 461.2,346.8 461.3,347.4 461.5,347.4 461.7,346.5 461.8,349.1 462.0,348.0 462.2,348.9 462.4,347.3 462.5,347.1 462.7,346.9 462.9,347.1 463.1,347.7 463.2,346.2 463.4,347.0 463.6,347.3 463.7,347.7 463.9,346.8 464.1,347.2 464.3,347.1 464.4,346.7 464.6,346.6 464.8,347.0 464.9,345.7 465.1,346.9 465.3,346.7 465.5,345.7 465.6,345.5 465.8,345.2 466.0,345.0 466.2,344.2 466.3,343.8 466.5,343.4 466.7,340.4 466.8,339.5 467.0,335.9 467.2,330.6 467.4,324.5 467.5,317.5 467.7,325.0 467.9,330.4 468.0,333.6 468.2,334.7 468.4,336.5 468.6,336.7 468.7,332.8 468.9,331.8 469.1,332.3 469.2,335.1 469.4,338.9 469.6,340.4 469.8,340.9 469.9,341.9 470.1,341.7 470.3,342.4 470.5,341.3 470.6,341.0 470.8,339.6 471.0,334.7 471.1,331.7 471.3,328.5 471.5,332.5 471.7,335.4 471.8,337.9 472.0,339.9 472.2,339.0 472.3,339.4 472.5,337.8 472.7,337.0 472.9,335.5 473.0,337.7 473.2,339.4 473.4,341.0 473.6,341.1 473.7,339.8 473.9,340.3 474.1,339.1 474.2,337.8 474.4,336.7 474.6,331.8 474.8,330.0 474.9,321.5 475.1,311.3 475.3,296.9 475.4,283.4 475.6,293.9 475.8,309.0 476.0,318.9 476.1,322.7 476.3,324.0 476.5,323.6 476.7,318.2 476.8,312.3 477.0,313.1 477.2,321.5 477.3,330.3 477.5,334.9 477.7,337.3 477.9,339.5 478.0,340.4 478.2,341.8 478.4,343.3 478.5,343.9 478.7,344.7 478.9,345.2 479.1,345.6 479.2,345.1 479.4,346.1 479.6,346.3 479.7,346.1 479.9,346.7 480.1,346.6 480.3,347.9 480.4,346.5 480.6,347.0 480.8,346.8 481.0,346.7 481.1,348.1 481.3,345.7 481.5,347.0 481.6,347.0 481.8,348.2 482.0,346.9 482.2,347.0 482.3,347.5 482.5,347.2 482.7,346.6 482.8,347.5 483.0,347.9 483.2,346.6 483.4,347.2 483.5,347.5 483.7,346.1 483.9,347.4 484.1,347.6 484.2,347.3 484.4,347.7 484.6,347.4 484.7,347.4 484.9,347.9 485.1,347.7 485.3,347.4 485.4,347.4 485.6,347.2 485.8,347.1 485.9,347.5 486.1,347.3 486.3,347.8 486.5,347.8 486.6,347.0 486.8,348.8 487.0,347.4 487.2,345.9 487.3,348.7 487.5,346.8 487.7,348.7 487.8,347.5 488.0,346.8 488.2,346.9 488.4,348.2 488.5,348.5 488.7,348.5 488.9,347.3 489.0,348.0 489.2,347.7 489.4,347.6 489.6,347.5 489.7,347.5 489.9,347.7 490.1,348.7 490.2,346.9 490.4,349.3 490.6,347.1 490.8,348.1 490.9,347.9 491.1,348.1 491.3,348.0 491.5,347.8 491.6,347.9 491.8,348.4 492.0,347.3 492.1,348.1 492.3,347.0 492.5,347.9 492.7,348.2 492.8,347.5 493.0,347.3 493.2,348.3 493.3,347.9 493.5,347.0 493.7,348.3 493.9,348.3 494.0,347.7 494.2,348.5 494.4,349.2 494.6,348.7 494.7,347.6 494.9,347.4 495.1,347.4 495.2,347.5 495.4,348.4 495.6,347.4 495.8,347.1 495.9,348.1 496.1,347.2 496.3,347.9 496.4,347.6 496.6,347.5 496.8,348.5 497.0,346.8 497.1,348.1 497.3,347.7 497.5,347.9 497.7,347.3 497.8,347.3 498.0,347.5 498.2,346.6 498.3,347.2 498.5,347.6 498.7,348.9 498.9,347.3 499.0,347.2 499.2,347.4 499.4,347.3 499.5,346.2 499.7,345.7 499.9,344.8 500.1,344.8 500.2,345.4 500.4,344.0 500.6,343.8 500.7,340.9 500.9,339.1 501.1,338.6 501.3,339.2 501.4,341.1 501.6,342.7 501.8,342.3 502.0,341.5 502.1,343.0 502.3,342.5 502.5,342.4 502.6,342.4 502.8,341.5 503.0,344.2 503.2,344.6 503.3,345.6 503.5,345.6 503.7,346.4 503.8,346.3 504.0,347.5 504.2,347.0 504.4,346.3 504.5,347.8 504.7,347.7 504.9,346.6 505.1,347.2 505.2,346.8 505.4,348.8 505.6,347.4 505.7,348.3 505.9,348.4 506.1,347.3 506.3,346.9 506.4,348.5 506.6,348.3 506.8,348.0 506.9,347.7 507.1,348.4 507.3,346.4 507.5,347.3 507.6,347.8 507.8,347.9 508.0,346.3 508.2,346.3 508.3,347.9 508.5,347.4 508.7,346.9 508.8,348.2 509.0,347.9 509.2,346.7 509.4,347.9 509.5,347.7 509.7,348.1 509.9,347.7 510.0,346.8 510.2,347.6 510.4,347.7 510.6,347.1 510.7,345.5 510.9,346.2 511.1,346.2 511.2,345.3 511.4,344.4 511.6,343.7 511.8,343.9 511.9,342.0 512.1,342.8 512.3,343.0 512.5,345.1 512.6,344.1 512.8,345.3 513.0,346.1 513.1,344.1 513.3,345.0 513.5,344.2 513.7,344.8 513.8,344.6 514.0,345.2 514.2,345.6 514.3,346.2 514.5,347.8 514.7,348.0 514.9,347.0 515.0,347.8 515.2,347.1 515.4,347.3 515.6,348.3 515.7,348.1 515.9,348.2 516.1,348.1 516.2,347.8 516.4,347.3 516.6,346.9 516.8,348.3 516.9,348.1 517.1,346.9 517.3,347.3 517.4,347.6 517.6,349.1 517.8,348.4 518.0,347.7 518.1,348.1 518.3,346.7 518.5,347.8 518.7,347.7 518.8,348.4 519.0,348.4 519.2,348.2 519.3,348.2 519.5,347.9 519.7,347.6 519.9,347.7 520.0,347.2 520.2,348.5 520.4,347.6 520.5,347.6 520.7,346.8 520.9,347.8 521.1,347.5 521.2,348.1 521.4,347.3 521.6,347.3 521.7,347.8 521.9,347.6 522.1,347.3 522.3,346.8 522.4,347.6 522.6,346.1 522.8,346.6 523.0,345.2 523.1,345.5 523.3,346.8 523.5,347.1 523.6,345.5 523.8,346.6 524.0,346.7 524.2,347.2 524.3,347.0 524.5,346.4 524.7,346.6 524.8,347.6 525.0,346.5 525.2,347.2 525.4,348.0 525.5,347.0 525.7,347.7 525.9,347.2 526.1,348.0 526.2,347.5 526.4,348.7 526.6,347.5 526.7,348.6 526.9,347.7 527.1,349.2 527.3,347.8 527.4,347.4 527.6,347.5 527.8,347.1 527.9,348.4 528.1,346.9 528.3,346.9 528.5,348.5 528.6,348.3 528.8,348.2 529.0,347.9 529.2,347.7 529.3,349.2 529.5,347.5 529.7,348.0 529.8,348.4 530.0,347.3 530.2,348.0 530.4,347.2 530.5,347.5 530.7,348.0 530.9,347.1 531.0,347.3 531.2,348.1 531.4,348.7 531.6,348.1 531.7,347.4 531.9,347.9 532.1,346.7 532.2,347.5 532.4,347.6 532.6,347.4 532.8,348.1 532.9,347.7 533.1,347.9 533.3,348.9 533.5,348.5 533.6,347.0 533.8,347.7 534.0,347.4 534.1,348.1 534.3,347.6 534.5,346.7 534.7,347.0 534.8,347.2 535.0,345.9 535.2,346.7 535.3,346.7 535.5,345.6 535.7,347.1 535.9,345.4 536.0,346.0 536.2,345.3 536.4,344.6 536.6,343.2 536.7,342.0 536.9,340.2 537.1,337.9 537.2,333.7 537.4,328.3 537.6,322.0 537.8,317.3 537.9,322.5 538.1,329.6 538.3,332.8 538.4,335.9 538.6,336.7 538.8,338.9 539.0,335.1 539.1,336.1 539.3,332.3 539.5,330.6 539.7,335.5 539.8,338.5 540.0,342.0 540.2,343.3 540.3,344.8 540.5,344.4 540.7,344.9 540.9,345.7 541.0,345.2 541.2,345.4 541.4,346.4 541.5,346.8 541.7,347.0 541.9,347.2 542.1,346.3 542.2,347.0 542.4,347.4 542.6,347.4 542.7,347.0 542.9,347.6 543.1,347.3 543.3,347.5 543.4,346.7 543.6,346.9 543.8,348.4 544.0,347.7 544.1,347.2 544.3,347.9 544.5,347.2 544.6,347.5 544.8,347.3 545.0,347.7 545.2,347.5 545.3,347.4 545.5,348.6 545.7,348.2 545.8,348.3 546.0,346.8 546.2,347.6 546.4,347.5 546.5,347.6 546.7,348.0 546.9,348.1 547.1,347.2 547.2,347.9 547.4,346.8 547.6,347.6 547.7,347.6 547.9,347.8 548.1,347.7 548.3,347.6 548.4,346.7 548.6,346.2 548.8,348.1 548.9,347.3 549.1,347.0 549.3,347.8 549.5,347.5 549.6,347.3 549.8,348.3 550.0,346.3 550.2,346.4 550.3,346.1 550.5,345.5 550.7,344.8 550.8,342.7 551.0,343.0 551.2,342.0 551.4,343.3 551.5,343.6 551.7,344.8 551.9,345.2 552.0,345.9 552.2,346.0 552.4,345.1 552.6,344.7 552.7,344.6 552.9,345.1 553.1,344.8 553.2,347.0 553.4,345.4 553.6,346.3 553.8,346.4 553.9,346.1 554.1,347.1 554.3,346.4 554.5,347.3 554.6,346.7 554.8,347.3 555.0,346.9 555.1,346.1 555.3,347.3 555.5,347.1 555.7,346.7 555.8,346.1 556.0,344.2 556.2,345.7 556.3,346.0 556.5,344.9 556.7,345.7 556.9,345.6 557.0,345.7 557.2,346.6 557.4,346.7 557.6,347.4 557.7,346.2 557.9,346.6 558.1,345.3 558.2,345.2 558.4,346.5 558.6,346.6 558.8,346.6 558.9,346.4 559.1,348.0 559.3,347.2 559.4,346.2 559.6,347.4 559.8,347.2 560.0,347.4 560.1,348.1 560.3,346.9 560.5,347.3 560.7,347.3 560.8,347.0 561.0,346.9 561.2,348.4 561.3,347.0 561.5,347.5 561.7,347.0 561.9,347.3 562.0,347.2 562.2,345.9 562.4,346.2 562.5,345.9 562.7,345.3 562.9,344.3 563.1,343.5 563.2,344.5 563.4,343.9 563.6,344.3 563.7,344.4 563.9,344.5 564.1,346.2 564.3,344.6 564.4,345.7 564.6,345.3 564.8,345.6 565.0,345.4 565.1,344.3 565.3,345.8 565.5,346.2 565.6,345.8 565.8,345.8 566.0,347.9 566.2,347.3 566.3,347.3 566.5,346.3 566.7,346.0 566.8,347.5 567.0,347.3 567.2,347.1 567.4,347.0 567.5,347.8 567.7,347.2 567.9,348.1 568.1,349.2 568.2,348.5 568.4,347.6 568.6,347.3 568.7,349.0 568.9,348.8 569.1,347.8 569.3,349.7 569.4,347.5 569.6,347.2 569.8,349.5 569.9,347.4 570.1,347.9 570.3,347.0 570.5,347.6 570.6,347.9 570.8,347.7 571.0,347.2 571.2,347.6 571.3,347.7 571.5,348.6 571.7,347.5 571.8,347.7 572.0,346.7 572.2,347.7 572.4,347.7 572.5,348.0 572.7,347.2 572.9,347.7 573.0,348.0 573.2,346.6 573.4,346.5 573.6,347.7 573.7,348.0 573.9,346.7 574.1,347.8 574.3,345.6 574.4,347.2 574.6,346.5 574.8,347.6 574.9,346.7 575.1,345.9 575.3,346.0 575.5,346.3 575.6,344.1 575.8,344.6 576.0,344.5 576.1,343.7 576.3,342.1 576.5,339.1 576.7,337.6 576.8,333.2 577.0,331.3 577.2,332.1 577.3,336.7 577.5,338.7 577.7,340.5 577.9,342.2 578.0,341.8 578.2,341.6 578.4,342.3 578.6,339.9 578.7,336.3 578.9,338.8 579.1,340.0 579.2,343.2 579.4,343.5 579.6,345.1 579.8,344.9 579.9,345.9 580.1,346.9 580.3,345.9 580.4,346.8 580.6,347.5 580.8,347.0 581.0,347.7 581.1,347.0 581.3,347.4 581.5,347.6 581.7,347.1 581.8,348.2 582.0,347.0 582.2,348.7 582.3,346.7 582.5,347.5 582.7,347.8 582.9,348.1 583.0,347.4 583.2,347.8 583.4,347.8 583.5,347.2 583.7,348.0 583.9,347.9 584.1,347.5 584.2,347.2 584.4,347.9 584.6,347.7 584.8,347.8 584.9,347.4 585.1,347.0 585.3,348.4 585.4,347.9 585.6,347.9 585.8,347.5 586.0,347.0 586.1,347.9 586.3,347.7 586.5,347.2 586.6,348.6 586.8,348.3 587.0,348.1 587.2,347.9 587.3,347.7 587.5,348.2 587.7,346.9 587.8,348.3 588.0,348.0 588.2,347.3 588.4,347.4 588.5,347.9 588.7,347.7 588.9,347.4 589.1,347.9 589.2,347.5 589.4,348.4 589.6,347.8 589.7,348.8 589.9,348.4 590.1,348.5 590.3,347.1 590.4,348.1 590.6,347.7 590.8,348.4 590.9,348.0 591.1,348.0 591.3,348.3 591.5,347.3 591.6,348.8 591.8,347.5 592.0,346.3 592.2,348.3 592.3,347.8 592.5,348.7 592.7,347.8 592.8,348.8 593.0,347.4 593.2,348.1 593.4,348.8 593.5,348.5 593.7,348.7 593.9,347.9 594.0,347.3 594.2,348.0 594.4,348.4 594.6,348.2 594.7,347.6 594.9,349.1 595.1,347.3 595.3,347.4 595.4,349.1 595.6,346.9 595.8,348.5 595.9,347.7 596.1,346.9 596.3,348.5 596.5,348.6 596.6,348.1 596.8,348.1 597.0,347.5 597.1,347.6 597.3,347.6 597.5,347.5 597.7,347.3 597.8,347.6 598.0,346.8 598.2,346.9 598.3,347.4 598.5,345.6 598.7,347.3 598.9,345.9 599.0,346.6 599.2,345.7 599.4,345.4 599.6,344.8 599.7,344.0 599.9,344.9 600.1,341.9 600.2,342.6 600.4,342.3 600.6,341.1 600.8,336.4 600.9,333.9 601.1,330.7 601.3,323.6 601.4,314.0 601.6,309.1 601.8,315.1 602.0,323.3 602.1,328.6 602.3,332.9 602.5,336.0 602.7,335.7 602.8,337.5 603.0,335.9 603.2,332.3 603.3,329.4 603.5,326.0 603.7,328.1 603.9,332.2 604.0,336.6 604.2,340.4 604.4,340.5 604.5,343.8 604.7,343.8 604.9,341.9 605.1,342.5 605.2,343.5 605.4,343.2 605.6,342.8 605.8,341.7 605.9,342.2 606.1,341.3 606.3,339.6 606.4,337.1 606.6,334.7 606.8,333.9 607.0,334.1 607.1,337.5 607.3,338.6 607.5,340.2 607.6,341.1 607.8,339.9 608.0,340.8 608.2,340.8 608.3,339.2 608.5,338.6 608.7,336.2 608.8,335.5 609.0,335.5 609.2,336.7 609.4,334.9 609.5,331.8 609.7,332.5 609.9,333.0 610.1,335.3 610.2,339.4 610.4,339.1 610.6,340.5 610.7,341.0 610.9,340.7 611.1,341.4 611.3,341.2 611.4,340.1 611.6,340.1 611.8,339.9 611.9,342.8 612.1,341.6 612.3,344.1 612.5,344.1 612.6,344.8 612.8,345.4 613.0,345.7 613.2,346.0 613.3,347.3 613.5,346.8 613.7,345.9 613.8,347.4 614.0,347.5 614.2,345.7 614.4,346.3 614.5,346.2 614.7,347.1 614.9,347.0 615.0,346.8 615.2,346.9 615.4,347.3 615.6,348.2 615.7,347.7 615.9,348.2 616.1,346.4 616.3,347.6 616.4,347.5 616.6,347.2 616.8,347.4 616.9,347.1 617.1,347.7 617.3,348.2 617.5,346.3 617.6,347.7 617.8,347.6 618.0,347.7 618.1,347.5 618.3,347.2 618.5,346.7 618.7,347.7 618.8,346.8 619.0,347.3 619.2,346.1 619.3,347.4 619.5,346.5 619.7,345.9 619.9,346.9 620.0,345.8 620.2,345.4 620.4,345.6 620.6,344.7 620.7,343.3 620.9,342.9 621.1,342.1 621.2,340.3 621.4,337.5 621.6,333.6 621.8,329.0 621.9,322.5 622.1,317.6 622.3,324.0 622.4,330.1 622.6,335.2 622.8,335.9 623.0,339.9 623.1,339.3 623.3,339.0 623.5,340.1 623.7,338.4 623.8,336.0 624.0,332.4 624.2,333.5 624.3,335.2 624.5,338.2 624.7,340.9 624.9,342.5 625.0,342.9 625.2,344.4 625.4,345.2 625.5,345.8 625.7,345.6 625.9,346.5 626.1,346.1 626.2,346.7 626.4,346.2 626.6,347.5 626.8,347.1 626.9,347.0 627.1,347.1 627.3,346.7 627.4,347.2 627.6,347.0 627.8,346.4 628.0,347.1 628.1,348.2 628.3,348.5" fill="none" stroke="#2a2ad4" stroke-width="0.85" marker-start="url(#m)" marker-mid="url(#m)" marker-end="url(#m)"/>
 <rect x="111.9" y="103.4" width="516.4" height="247.6" fill="none" stroke="#161a26" stroke-width="1.5"/>
 <text class="ax" x="111.90" y="370.2" font-size="13.3" text-anchor="middle">20</text>
 <text class="ax" x="197.97" y="370.2" font-size="13.3" text-anchor="middle">30</text>
 <text class="ax" x="284.03" y="370.2" font-size="13.3" text-anchor="middle">40</text>
 <text class="ax" x="370.10" y="370.2" font-size="13.3" text-anchor="middle">50</text>
 <text class="ax" x="456.17" y="370.2" font-size="13.3" text-anchor="middle">60</text>
 <text class="ax" x="542.23" y="370.2" font-size="13.3" text-anchor="middle">70</text>
 <text class="ax" x="628.30" y="370.2" font-size="13.3" text-anchor="middle">80</text>
 <text class="ax" x="100.2" y="357.50" font-size="13.3" text-anchor="end">0</text>
 <text class="ax" x="100.2" y="307.98" font-size="13.3" text-anchor="end">1000</text>
 <text class="ax" x="100.2" y="258.46" font-size="13.3" text-anchor="end">2000</text>
 <text class="ax" x="100.2" y="208.94" font-size="13.3" text-anchor="end">3000</text>
 <text class="ax" x="100.2" y="159.42" font-size="13.3" text-anchor="end">4000</text>
 <text class="ax" x="100.2" y="109.90" font-size="13.3" text-anchor="end">5000</text>
 <text class="ax" x="445" y="383.2" font-size="14" font-style="italic">2&#952;</text><text class="ax" x="465.4" y="383.2" font-size="14" font-style="italic" letter-spacing="1.3">(&#176;)</text>
 <text class="ax" transform="translate(51.4 200.5) rotate(-90)" font-size="14.4" font-style="italic" text-anchor="middle">Intensity (arb. units)</text>
 <path d="M511.1 142.5 H525.4" stroke="#4848c0" stroke-width="0.9"/>
 <circle cx="517.8" cy="142.6" r="1" fill="#3030a0"/>
 <text x="542.2" y="145.6" font-family="Liberation Mono" font-size="8.1" fill="#3030b0">1. Nd2Fe17.dat</text>
</svg>
<div class="a ttl">WinPLOTR [CDIFX UMR6226 Rennes / ILL Grenoble]</div>
<div class="a mn" style="left:6.5px">File</div><div class="a mn" style="left:25.8px">Plot</div><div class="a mn" style="left:47.4px">Options</div>
<div class="a mn" style="left:81.4px">Points Selection</div><div class="a mn" style="left:140.7px">X space</div><div class="a mn" style="left:174.1px">Calculations</div>
<div class="a mn" style="left:221.8px">Rietveld plot options</div><div class="a mn" style="left:296.7px">Text</div><div class="a mn" style="left:317.7px">External applications</div>
<div class="a mn" style="left:392px">Tools</div><div class="a mn" style="left:417.4px">Help</div>
<div class="a st" style="left:9.7px">06-09-2019</div>
<div class="a st" style="left:85px">19:47</div>
<div class="a st" style="left:161px">NUM</div>
<div class="a st" style="left:311.6px">2Th =</div>
<div class="a st" style="left:345.5px">38.75530 [?</div>
<div class="a st" style="left:396.8px">[d=</div>
<div class="a st" style="left:416.2px">2.32163 A [wl =</div>
<div class="a st" style="left:486.2px">1.54060</div>
<div class="a st" style="left:525.7px">Y =</div>
<div class="a st" style="left:546.5px">1739.1</div>
</body></html>
